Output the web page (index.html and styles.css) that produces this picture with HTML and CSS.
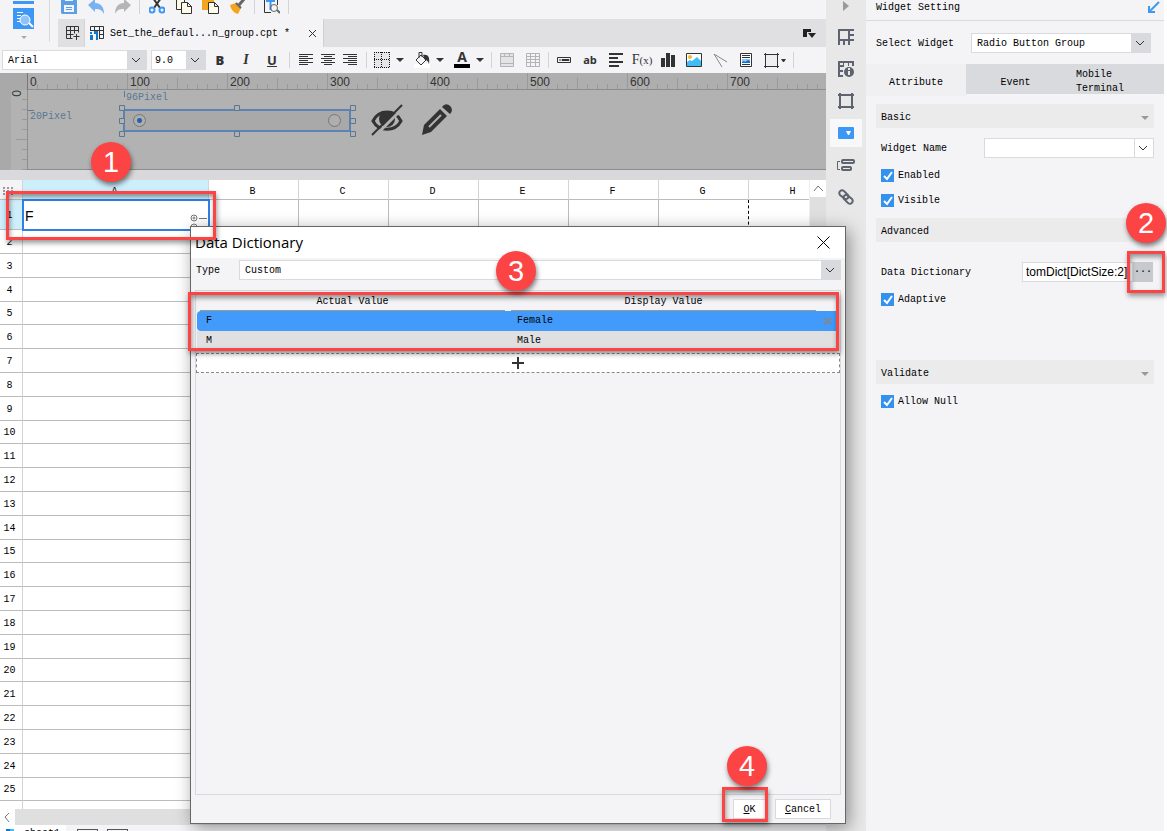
FILE: index.html
```html
<!DOCTYPE html>
<html lang="en">
<head>
    <meta charset="UTF-8">
    <meta name="viewport" content="width=device-width, initial-scale=1.0">
    <title>Report Designer</title>
    <link rel="stylesheet" href="styles.css">
</head>
<body>
    <div class="app">
        <div class="editor">
            <!-- Quick access bar and file tabs -->
            <header class="top">
                <button class="logo" aria-label="Template menu">
                    <svg width="22" height="42" viewBox="0 0 22 42">
                        <path fill="#3d97f5" d="M0 1h21v3H0zM0 8h21v21H0z"/>
                        <path fill="#fff" d="M4 12h6v1H4zM4 15h4v1H4zM4 18h3v1H4zM4 21h4v1H4z"/>
                        <circle cx="12" cy="20" r="5" fill="#8ec2f9" stroke="#fff" stroke-width="1"/>
                        <path d="M16 23l4 4" stroke="#fff" stroke-width="2"/>
                        <path fill="#aaa" d="M8 36h6l-3 3z"/>
                    </svg>
                </button>
                <div class="top-main">
                    <div class="quick">
                        <button aria-label="Save"><svg width="16" height="18" viewBox="0 0 16 18"><path fill="#5b9fe6" d="M0 0h16v18H1l-1-1z"/><path fill="#f4f4f7" d="M3 9h10v7H3zM4 0h8v5H4z"/><path fill="#5b9fe6" d="M5 11h6v1H5zM5 13h6v1H5z"/></svg></button>
                        <button aria-label="Undo"><svg width="16" height="18" viewBox="0 0 16 18"><path fill="#78b2f2" d="M0 9l7-6v4c6 0 9 4 9 11-2-4-4-5-9-5v3z"/></svg></button>
                        <button aria-label="Redo"><svg width="16" height="18" viewBox="0 0 16 18"><path fill="#b5b5b8" d="M16 9L9 3v4C3 7 0 11 0 18c2-4 4-5 9-5v3z"/></svg></button>
                        <span class="sep"></span>
                        <button aria-label="Cut"><svg width="16" height="18" viewBox="0 0 16 18" fill="none"><path d="M4 2l7 10M12 2L5 12" stroke="#333" stroke-width="2"/><circle cx="3" cy="14" r="2.500" stroke="#3d97f5" stroke-width="2"/><circle cx="13" cy="14" r="2.500" stroke="#3d97f5" stroke-width="2"/></svg></button>
                        <button aria-label="Copy"><svg width="17" height="18" viewBox="0 0 17 18"><path fill="#fffbe9" stroke="#333" d="M1.500 1.500h8v12h-8z"/><path fill="#fffbe9" stroke="#333" d="M6.500 6.500h6l4 4v7h-10zM12.500 6.500v4h4"/></svg></button>
                        <button aria-label="Paste"><svg width="17" height="18" viewBox="0 0 17 18"><path fill="#f3a51d" d="M0 0h12v14H0z"/><path fill="#fffbe9" stroke="#333" d="M6.500 6.500h6l4 4v7h-10zM12.500 6.500v4h4"/></svg></button>
                        <button aria-label="Format painter"><svg width="16" height="18" viewBox="0 0 16 18"><path d="M9 9l6-7" stroke="#666" stroke-width="3"/><path fill="#f3a51d" d="M0 9l6-2 5 5-3 6c-4-1-7-4-8-9z"/><path d="M6 7l5 5" stroke="#666" stroke-width="2"/></svg></button>
                        <span class="sep"></span>
                        <button aria-label="Preview"><svg width="17" height="18" viewBox="0 0 17 18" fill="none"><path d="M8 16.500H1.500v-16h13V9" stroke="#333"/><path d="M3 5h9M7.500 5v9" stroke="#3d97f5" stroke-width="2"/><circle cx="11" cy="12" r="3.500" stroke="#666"/><path d="M14 14l3 3" stroke="#666" stroke-width="2"/></svg></button>
                        <span class="sep"></span>
                    </div>
                    <div class="file-tabs">
                        <button class="new-tab" aria-label="New template">
                            <svg width="14" height="14" viewBox="0 0 14 14" fill="none" stroke="#333"><path d="M6.500 12.500h-6v-12h12v6M.5 4.500h12M.5 8.500h7M4.500.5v12M8.500.5v7M10.500 8v6M7.500 10.500h6"/></svg>
                        </button>
                        <div class="file-tab">
                            <svg width="14" height="14" viewBox="0 0 14 14" fill="none"><path stroke="#333" d="M.5 5V.5h13v12H9M.5 4.500h13M9 8.500h4.500M4.500.5v5M9.500.5v12"/><path fill="#1277c9" d="M0 6h2v2H0zM0 9h3v5H0zM4 5h4v9H6V8H4z"/></svg>
                            <span>Set_the_defaul...n_group.cpt *</span>
                            <button aria-label="Close tab"><svg width="9" height="9" viewBox="0 0 9 9"><path d="M1 1l7 7M8 1L1 8" stroke="#333"/></svg></button>
                        </div>
                        <button class="tab-list" aria-label="Tab list"><svg width="13" height="11" viewBox="0 0 13 11"><path fill="#222" d="M0 1h8v3H4v5H0zM5 5h8l-4 5z"/></svg></button>
                    </div>
                </div>
            </header>

            <!-- Format bar -->
            <div class="format">
                <select class="font-name" aria-label="Font"><option>Arial</option></select>
                <select class="font-size" aria-label="Font size"><option>9.0</option></select>
                <div class="group group-style">
                    <button class="glyph" aria-label="Bold"><b>B</b></button>
                    <button class="glyph" aria-label="Italic"><i>I</i></button>
                    <button class="glyph" aria-label="Underline"><u>U</u></button>
                </div>
                <span class="sep"></span>
                <div class="group group-align">
                    <button aria-label="Align left"><svg width="14" height="12" viewBox="0 0 14 12"><path stroke="#333" d="M0 .5h14M0 2.500h9M0 4.500h14M0 6.500h9M0 8.500h14M0 10.500h9"/></svg></button>
                    <button aria-label="Align center"><svg width="14" height="12" viewBox="0 0 14 12"><path stroke="#333" d="M0 .5h14M3 2.500h8M0 4.500h14M3 6.500h8M0 8.500h14M3 10.500h8"/></svg></button>
                    <button aria-label="Align right"><svg width="14" height="12" viewBox="0 0 14 12"><path stroke="#333" d="M0 .5h14M5 2.500h9M0 4.500h14M5 6.500h9M0 8.500h14M5 10.500h9"/></svg></button>
                </div>
                <span class="sep"></span>
                <div class="group group-menu">
                    <button aria-label="Borders"><svg width="16" height="16" viewBox="0 0 16 16"><path fill="#e6e6e8" d="M0 0h16v16H0z"/><path fill="none" stroke="#111" stroke-dasharray="1 1" d="M0 .5h16M0 15.500h16M.5 0v16M15.500 0v16M0 7.500h16M7.500 0v16"/></svg><span class="caret"></span></button>
                    <button aria-label="Fill colour"><svg width="16" height="16" viewBox="0 0 16 16"><path fill="#fff" d="M0 12h16v4H0z"/><path fill="#f4f4f7" stroke="#333" d="M2 8l5-5 5 5-5 5zM5 6V.5h3V5"/><path fill="#333" d="M9 3c5-1 7 2 6 9-1-3-2-4-4-4z"/></svg><span class="caret"></span></button>
                    <button aria-label="Font colour"><span class="font-color">A</span><span class="caret"></span></button>
                </div>
                <span class="sep"></span>
                <div class="group">
                    <button aria-label="Merge cells"><svg width="14" height="14" viewBox="0 0 14 14" fill="none" stroke="#b4b4b6"><path fill="#e4e4e6" d="M.5.5h13v13H.5zM.5 3.500h13M4.500.5v3M9.500.5v3M.5 10.500h13"/></svg></button>
                    <button aria-label="Unmerge cells"><svg width="14" height="14" viewBox="0 0 14 14" fill="none" stroke="#b4b4b6"><path d="M.5.5h13v13H.5zM.5 3.500h13M.5 6.500h13M.5 9.500h13M4.500.5v13M9.500.5v13"/></svg></button>
                </div>
                <span class="sep"></span>
                <div class="group">
                    <button aria-label="Insert widget"><svg width="14" height="6" viewBox="0 0 14 6" fill="none" stroke="#333"><path d="M.5.5h13v5H.5zM5 2.500h7v1H5zM2 3h2"/></svg></button>
                    <button class="glyph-small" aria-label="Text"><b>ab</b></button>
                    <button aria-label="Rich text"><svg width="14" height="14" viewBox="0 0 14 14"><path stroke="#333" stroke-width="2" d="M0 1h14M0 5h9M0 9h14M0 13h10"/></svg></button>
                    <button class="fx" aria-label="Formula">F<small>(x)</small></button>
                    <button aria-label="Chart"><svg width="14" height="14" viewBox="0 0 14 14"><path fill="#333" d="M0 5h4v9H0zM5 0h4v14H5zM10 2h4v12h-4z"/></svg></button>
                    <button aria-label="Image"><svg width="16" height="14" viewBox="0 0 16 14"><path fill="#fff" stroke="#333" d="M.5.5h15v13H.5z"/><path fill="#3fbdf5" d="M1 13V9l3-2 2 1 5-4 4 4v5z"/><circle cx="4" cy="4" r="2" fill="#f7b733"/></svg></button>
                    <button aria-label="Slope line"><svg width="14" height="13" viewBox="0 0 14 13" fill="none" stroke="#888"><path d="M1 0l13 8M1 0l8 13"/></svg></button>
                    <button aria-label="Sub report"><svg width="12" height="14" viewBox="0 0 12 14"><path fill="#fff" stroke="#333" d="M.5.5h11v13H.5z"/><path stroke="#333" d="M2 2.500h8M2 4.500h8M2 11.500h8"/><path fill="#8cc8f8" d="M2 6h8v4H2z"/><path fill="#1273d0" d="M2 10V9l2-1 1 1 3-2 2 1v2z"/></svg></button>
                    <button class="wide" aria-label="Float element"><svg width="22" height="15" viewBox="0 0 22 15"><path fill="#efefef" stroke="#333" d="M1.500 1.500h12v12h-12z"/><path stroke="#333" d="M0 1.500h15M0 13.500h15M1.500 0v15M13.500 0v15"/><path fill="#333" d="M17 6h5l-2 3h-1z"/></svg></button>
                </div>
                <span class="sep"></span>
            </div>

            <!-- Widget designer -->
            <div class="designer">
                <div class="corner"></div>
                <div class="ruler-x" id="ruler-x"></div>
                <div class="ruler-y"><span>0</span></div>
                <div class="canvas">
                    <span class="measure measure-x">96Pixel</span>
                    <span class="measure measure-y">20Pixel</span>
                    <div class="radio-widget">
                        <input type="radio" name="preview" aria-label="First option" checked>
                        <input type="radio" name="preview" aria-label="Second option">
                    </div>
                    <svg class="handles" width="238" height="32" viewBox="0 0 238 32" fill="#b2b2b2" stroke="#5a7894">
                        <path d="M.5.5h5v5h-5zM115.500.5h5v5h-5zM231.500.5h5v5h-5zM.5 13.500h5v5h-5zM231.500 13.500h5v5h-5zM.5 26.500h5v5h-5zM115.500 26.500h5v5h-5zM231.500 26.500h5v5h-5z"/>
                    </svg>
                    <button class="canvas-hide" aria-label="Hide">
                        <svg width="32" height="32" viewBox="0 0 32 32" fill="none" stroke="#333"><path stroke-width="3" d="M2 17C8 5 24 5 30 17 24 28 8 28 2 17z"/><circle cx="16" cy="15" r="8" fill="#333" stroke="none"/><path stroke="#b2b2b2" stroke-width="3" d="M5 31L32 4"/><path stroke-width="2" d="M1 31L31 1"/></svg>
                    </button>
                    <button class="canvas-edit" aria-label="Edit">
                        <svg width="32" height="32" viewBox="0 0 32 32"><path fill="#333" d="M1 31l2-10L19 5l7 7-16 16zM21 3c3-4 6-3 8-1s3 5 0 8z"/><path d="M8 23L20 11" stroke="#b2b2b2" stroke-width="2"/></svg>
                    </button>
                </div>
            </div>

            <!-- Spreadsheet -->
            <div class="sheet">
                <div class="sheet-view">
                    <table>
                        <colgroup>
                            <col class="col-num"><col class="col-a"><col><col><col><col><col><col><col>
                        </colgroup>
                        <thead>
                            <tr>
                                <th class="all"><svg width="11" height="8" viewBox="0 0 11 8"><path stroke="#999" stroke-width="2" stroke-dasharray="2 2" d="M0 1h11M0 4h11M0 7h11"/></svg></th>
                                <th class="on">A</th><th>B</th><th>C</th><th>D</th><th>E</th><th>F</th><th>G</th><th>H</th>
                            </tr>
                        </thead>
                        <tbody id="rows"></tbody>
                    </table>
                </div>
                <div class="scroll-y">
                    <button aria-label="Scroll up"><svg width="11" height="7" viewBox="0 0 11 7" fill="none"><path d="M1 6l4-5 5 5" stroke="#777"/></svg></button>
                    <div class="thumb"></div>
                </div>
            </div>
            <div class="scroll-x">
                <button aria-label="Scroll left"><svg width="6" height="11" viewBox="0 0 6 11" fill="none"><path d="M5 1L1 5l4 5" stroke="#777"/></svg></button>
                <div class="thumb"></div>
            </div>
            <footer class="sheet-tabs">
                <div class="sheet-tab"><svg width="8" height="8" viewBox="0 0 8 8"><path fill="#1277c9" d="M0 0h4v8H0z"/><path fill="#3fbdf5" d="M4 0h4v8H4z"/></svg><span>sheet1</span></div>
                <button aria-label="Add sheet"></button>
                <button aria-label="Add form sheet"></button>
            </footer>
        </div>

        <!-- Panel switcher -->
        <nav class="rail">
            <button class="rail-fold" aria-label="Collapse"><svg width="6" height="10" viewBox="0 0 6 10"><path fill="#999" d="M0 0l6 5-6 5z"/></svg></button>
            <button aria-label="Cell element"><svg width="16" height="16" viewBox="0 0 16 16" fill="none" stroke="#5d6470" stroke-width="2"><path d="M1 16V1h15M0 11h16M11 1v15M11 6h5M6 11v5"/></svg></button>
            <button aria-label="Cell attributes"><svg width="16" height="16" viewBox="0 0 16 16"><path fill="none" stroke="#5d6470" stroke-width="2" d="M5 15H1V1h14v4M0 5h6M0 10h5"/><path stroke="#5d6470" d="M5.500 1v5M10.500 1v4"/><circle cx="11" cy="11" r="5" fill="#5d6470"/><path fill="#e8e8e8" d="M10 7h2v2h-2zM10 10h2v4h-2z"/></svg></button>
            <button aria-label="Float element"><svg width="16" height="16" viewBox="0 0 16 16" fill="none" stroke="#5d6470" stroke-width="2"><path d="M0 2h16M0 14h16M2 0v16M14 0v16"/></svg></button>
            <button class="active" aria-label="Widget setting"><svg width="16" height="12" viewBox="0 0 16 12"><rect width="16" height="12" rx="1" fill="#3d97f5"/><path fill="#fff" d="M8 4h5l-2 4h-1z"/></svg></button>
            <button aria-label="Condition attributes"><svg width="18" height="13" viewBox="0 0 18 13" fill="none" stroke="#5d6470"><path d="M3 2.500H.5v8H3"/><rect x="5" y="1" width="12" height="3" rx="1" stroke-width="2"/><rect x="5" y="8" width="9" height="3" rx="1" stroke-width="2"/></svg></button>
            <button aria-label="Hyperlink"><svg width="16" height="16" viewBox="0 0 16 16" fill="none" stroke="#5d6470" stroke-width="2" stroke-linecap="round"><path d="M7 10L2 6C0 3 3 0 6 2l4 4c1 2 0 4-2 4"/><path d="M9 6l5 4c2 3-1 6-4 4l-4-4c-1-2 0-4 2-4"/></svg></button>
        </nav>

        <!-- Widget setting panel -->
        <aside class="settings">
            <div class="settings-head">
                <span>Widget Setting</span>
                <button aria-label="Detach panel"><svg width="12" height="12" viewBox="0 0 12 12"><path d="M11 1L3 9" stroke="#3d97f5" stroke-width="2"/><path fill="#3d97f5" d="M0 12V5h2v3l2 2h3v2z"/></svg></button>
            </div>
            <div class="field field-select">
                <label for="widget-type">Select Widget</label>
                <select id="widget-type"><option>Radio Button Group</option></select>
            </div>
            <div class="tabs">
                <button class="active">Attribute</button>
                <button>Event</button>
                <button class="two-line">Mobile<br>Terminal</button>
            </div>
            <div class="settings-body">
                <button class="section">Basic<span class="caret"></span></button>
                <div class="field field-name">
                    <label for="widget-name">Widget Name</label>
                    <select id="widget-name" class="plain"><option></option></select>
                </div>
                <label class="check"><input type="checkbox" checked>Enabled</label>
                <label class="check"><input type="checkbox" checked>Visible</label>
                <button class="section">Advanced<span class="caret"></span></button>
                <div class="field field-dict">
                    <label for="dict">Data Dictionary</label>
                    <input type="text" id="dict" value="tomDict[DictSize:2]">
                    <button aria-label="Edit dictionary">&middot;&middot;&middot;</button>
                </div>
                <label class="check"><input type="checkbox" checked>Adaptive</label>
                <button class="section section-last">Validate<span class="caret"></span></button>
                <label class="check"><input type="checkbox" checked>Allow Null</label>
            </div>
        </aside>
    </div>

    <!-- Data dictionary dialog -->
    <div class="dialog" role="dialog" aria-labelledby="dialog-title">
        <div class="dialog-title">
            <h2 id="dialog-title">Data Dictionary</h2>
            <button aria-label="Close"><svg width="13" height="13" viewBox="0 0 13 13"><path d="M.5.5l12 12M12.500.5l-12 12" stroke="#000"/></svg></button>
        </div>
        <div class="dialog-type">
            <label for="dict-type">Type</label>
            <select id="dict-type"><option>Custom</option></select>
        </div>
        <div class="dialog-body">
            <table class="dict-table">
                <thead>
                    <tr><th><span>Actual Value</span></th><th><span>Display Value</span></th><th class="del"></th></tr>
                </thead>
                <tbody>
                    <tr class="selected"><td>F</td><td>Female</td><td class="del"><button aria-label="Delete"><svg width="9" height="8" viewBox="0 0 9 8"><path d="M1 1l7 6M8 1L1 7" stroke="#808890" stroke-width="2"/></svg></button></td></tr>
                    <tr><td>M</td><td>Male</td><td></td></tr>
                </tbody>
            </table>
            <button class="add" aria-label="Add row"><svg width="12" height="12" viewBox="0 0 12 12"><path d="M6 0v12M0 6h12" stroke="#333" stroke-width="2"/></svg></button>
        </div>
        <div class="dialog-foot">
            <button class="ok"><u>O</u>K</button>
            <button class="cancel"><u>C</u>ancel</button>
        </div>
    </div>

    <!-- Step marks -->
    <div class="frame frame-1"></div><div class="step step-1">1</div>
    <div class="frame frame-2"></div><div class="step step-2">2</div>
    <div class="frame frame-3"></div><div class="step step-3">3</div>
    <div class="frame frame-4"></div><div class="step step-4">4</div>

    <script>
        // Ruler segments
        const ruler = document.getElementById('ruler-x');
        for (let i = 0; i < 8; i++) {
            const mark = document.createElement('span');
            mark.textContent = i * 100;
            ruler.appendChild(mark);
        }

        // Sheet rows
        const rows = document.getElementById('rows');
        const radios = `<svg width="18" height="16" viewBox="0 0 18 16" fill="none" stroke="#777"><circle cx="5" cy="5" r="3"/><circle cx="5" cy="5" r="1"/><path d="M10 5.500h8M10 13.500h8"/><circle cx="5" cy="14" r="3"/><circle cx="5" cy="14" r="1"/></svg>`;
        for (let r = 1; r <= 26; r++) {
            const tr = document.createElement('tr');
            const first = r === 1 ? `<td class="cell-on"><div>F${radios}</div></td>` : '<td></td>';
            tr.innerHTML = `<th class="${r === 1 ? 'on' : ''}">${r}</th>${first}${'<td></td>'.repeat(7)}`;
            rows.appendChild(tr);
        }
    </script>
</body>
</html>
```

FILE: styles.css
```css
* {
    box-sizing: border-box;
}
body {
    margin: 0;
    height: 100vh;
    overflow: hidden;
    background-color: #fff;
    color: #000;
    font-family: "Liberation Mono", monospace;
    font-size: 10px;
    line-height: 14px;
}
button,
select,
input {
    font: inherit;
    color: inherit;
    margin: 0;
}
button {
    display: flex;
    align-items: center;
    justify-content: center;
    padding: 0;
    border: 0;
    background: none;
}
svg {
    display: block;
    flex: none;
}
select {
    appearance: none;
    height: 20px;
    padding: 2px 22px 0 5px;
    border: 1px solid #d9dadd;
    border-radius: 0;
    background: #fff url("data:image/svg+xml,%3Csvg xmlns='http://www.w3.org/2000/svg' width='19' height='18'%3E%3Cpath fill='%23d9dadd' d='M0 0h19v18H0z'/%3E%3Cpath fill='none' stroke='%23333' d='M5 7l4 4 4-4'/%3E%3C/svg%3E") no-repeat right center;
}
select.plain {
    background-image: url("data:image/svg+xml,%3Csvg xmlns='http://www.w3.org/2000/svg' width='19' height='18'%3E%3Cpath fill='%23d9dadd' d='M0 0h1v18H0z'/%3E%3Cpath fill='none' stroke='%23333' d='M5 7l4 4 4-4'/%3E%3C/svg%3E");
}
.app {
    display: flex;
    height: 100%;
    padding-right: 3px;
}
.editor {
    flex: 1;
    min-width: 0;
    display: flex;
    flex-direction: column;
    background-color: #f4f4f7;
}
.sep {
    flex: none;
    width: 1px;
    height: 16px;
    margin: 0 2px;
    background-color: #d4d4d6;
}
.caret {
    border: 4px solid transparent;
    border-top-color: #333;
    border-bottom: 0;
}

/* Top */
.top {
    display: flex;
    height: 47px;
}
.logo {
    align-items: flex-start;
    width: 50px;
    height: 42px;
    padding-right: 2px;
    border-right: 1px solid #d9dadd;
}
.top-main {
    flex: 1;
    padding-left: 5px;
}
.quick {
    display: flex;
    align-items: flex-end;
    height: 19px;
    padding-bottom: 5px;
}
.quick button {
    width: 27px;
}
.quick .sep {
    margin: 0 3px;
}
.file-tabs {
    display: flex;
    height: 28px;
    margin-left: 3px;
    background-color: #e0e0e2;
}
.new-tab {
    width: 27px;
    border-right: 1px solid #d4d4d6;
    padding-left: 4px;
}
.file-tab {
    display: flex;
    align-items: center;
    gap: 6px;
    width: 239px;
    padding: 0 6px 0 5px;
    background-color: #f4f4f7;
    border-right: 1px solid #d0d0d2;
}
.file-tab span {
    padding-top: 2px;
}
.file-tab button {
    margin-left: auto;
}
.tab-list {
    margin-left: auto;
    padding-right: 10px;
}

/* Format bar */
.format {
    display: flex;
    align-items: center;
    height: 26px;
    padding-left: 2px;
}
.font-name {
    width: 145px;
    margin-right: 4px;
}
.font-size {
    width: 55px;
    padding-left: 3px;
}
.group {
    display: flex;
}
.group button {
    width: 26px;
    height: 20px;
}
.group-style {
    padding: 0 2px 0 1px;
}
.group-align {
    padding: 0 3px;
}
.group-align button {
    width: 22px;
}
.group-menu button {
    width: 40px;
    gap: 6px;
}
.group .wide {
    width: 32px;
}
.glyph {
    color: #333;
    font-family: "Open Sans", sans-serif;
    font-size: 13px;
    font-weight: bold;
}
.glyph i {
    font-family: "Liberation Serif", serif;
    font-size: 14px;
}
.glyph-small {
    color: #333;
    font-family: "Open Sans", sans-serif;
    font-size: 11px;
}
.font-color {
    width: 16px;
    height: 16px;
    border-bottom: 4px solid #000;
    color: #333;
    font-family: "Open Sans", sans-serif;
    font-size: 14px;
    font-weight: bold;
    line-height: 10px;
}
.fx {
    color: #333;
    font-family: "Liberation Serif", serif;
    font-size: 14px;
}
.fx small {
    font-size: 11px;
}

/* Designer */
.designer {
    display: grid;
    grid-template-columns: 28px 1fr;
    grid-template-rows: 17px 80px;
    background-color: #b2b2b2;
    overflow: hidden;
}
.corner {
    background-color: #a9a9a9;
    border-right: 1px solid #777;
}
.ruler-x {
    display: flex;
    min-width: 0;
    overflow: hidden;
    border-bottom: 1px solid #8c8c8c;
    background-color: #aeaeae;
}
.ruler-x span {
    flex: none;
    width: 100px;
    padding: 1px 0 0 2px;
    color: #333;
    font-family: "Liberation Sans", sans-serif;
    font-size: 12px;
    line-height: 16px;
    background:
        linear-gradient(#999, #999) 99px 0 / 1px 16px no-repeat,
        linear-gradient(#999, #999) 49px 5px / 1px 11px no-repeat,
        repeating-linear-gradient(90deg, transparent 0 9px, #999 9px 10px) 0 11px / 100px 5px no-repeat;
}
.ruler-y {
    margin-left: 11px;
    border-right: 1px solid #8c8c8c;
    color: #333;
    font-family: "Liberation Sans", sans-serif;
    font-size: 12px;
    background:
        linear-gradient(#999, #999) 5px 49px / 11px 1px no-repeat,
        repeating-linear-gradient(transparent 0 9px, #999 9px 10px) 11px 0 / 5px 80px no-repeat;
    box-shadow: -11px 0 #a9a9a9;
}
.ruler-y span {
    display: block;
    width: 10px;
    height: 7px;
    line-height: 10px;
    writing-mode: vertical-rl;
}
.canvas {
    position: relative;
    border-bottom: 1px solid #8c8c8c;
}
.measure {
    position: absolute;
    color: #5a7894;
    line-height: 13px;
}
.measure-x {
    left: 96px;
    top: 1px;
    padding-left: 2px;
    background: linear-gradient(#5a7894, #5a7894) 0 0 / 1px 6px no-repeat;
}
.measure-y {
    left: 0;
    top: 20px;
    padding-left: 2px;
    background: linear-gradient(#5a7894, #5a7894) 0 0 / 6px 1px no-repeat;
}
.radio-widget {
    position: absolute;
    left: 95px;
    top: 19px;
    width: 228px;
    height: 23px;
    display: flex;
    align-items: center;
    justify-content: space-between;
    padding: 0 8px;
    border: 2px solid #5b84b4;
    background-color: #a9a9a9;
}
.radio-widget input {
    appearance: none;
    width: 13px;
    height: 13px;
    border: 1px solid #777;
    border-radius: 50%;
    background-color: #aeaeae;
}
.radio-widget input:checked {
    background: radial-gradient(#2862ac 0 2px, #aeaeae 3px);
}
.handles {
    position: absolute;
    left: 91px;
    top: 15px;
}
.canvas-hide,
.canvas-edit {
    position: absolute;
    top: 14px;
}
.canvas-hide {
    left: 343px;
}
.canvas-edit {
    left: 393px;
}

/* Spreadsheet */
.sheet {
    flex: 1;
    min-height: 0;
    display: flex;
    margin-top: 10px;
    background-color: #fff;
    box-shadow: 0 -10px #d9d9dc;
}
.sheet-view {
    flex: 1;
    min-width: 0;
    overflow: hidden;
}
.sheet table {
    table-layout: fixed;
    width: 839px;
    border-spacing: 0;
}
.sheet col {
    width: 90px;
}
.sheet .col-num {
    width: 23px;
}
.sheet .col-a {
    width: 186px;
}
.sheet th,
.sheet td {
    height: 24px;
    padding: 0;
    border-right: 1px solid #bcbcbe;
    border-bottom: 1px solid #bcbcbe;
}
.sheet th {
    padding: 2px 2px 0 0;
    font-weight: normal;
    border-right-color: #d4d4d6;
}
.sheet tbody th {
    padding-right: 3px;
}
.sheet tbody tr:nth-child(5n) > * {
    height: 23px;
}
.sheet tbody tr:first-child > * {
    height: 30px;
}
.sheet tbody tr:first-child td:nth-child(8) {
    border-right: 1px dashed #000;
}
.sheet thead th {
    height: 20px;
    padding-top: 4px;
}
.sheet thead .all {
    padding: 2px 0 0 3px;
    background-color: #f4f4f7;
}
.sheet .on {
    background-color: #cdeefb;
}
.cell-on {
    outline: 2px solid #2f7fe6;
    outline-offset: -1px;
}
.cell-on div {
    display: flex;
    align-items: center;
    justify-content: space-between;
    height: 29px;
    padding: 2px 1px 0 2px;
    font-family: "Liberation Sans", sans-serif;
    font-size: 14px;
}
.cell-on svg {
    align-self: flex-end;
}
.scroll-y {
    display: flex;
    flex-direction: column;
    width: 17px;
    border-left: 1px solid #eee;
    background-color: #fff;
}
.scroll-y button {
    height: 17px;
}
.thumb {
    flex: 1;
    background-color: #dfdfdf;
}
.scroll-x {
    display: flex;
    height: 16px;
    background-color: #fff;
}
.scroll-x button {
    width: 15px;
    padding-right: 2px;
}
.sheet-tabs {
    display: flex;
    align-items: flex-start;
    gap: 9px;
    height: 6px;
    overflow: hidden;
}
.sheet-tab {
    display: flex;
    gap: 10px;
    width: 66px;
    margin-right: 2px;
    padding: 4px 0 0 6px;
    background-color: #fff;
}
.sheet-tab span {
    line-height: 10px;
}
.sheet-tabs button {
    width: 21px;
    height: 14px;
    margin-top: 4px;
    border: 1px solid #555;
}

/* Rail */
.rail {
    display: flex;
    flex-direction: column;
    align-items: center;
    gap: 4px;
    width: 40px;
    background-color: #e8e8e8;
}
.rail button {
    width: 32px;
    height: 28px;
}
.rail .rail-fold {
    height: 19px;
    padding-bottom: 7px;
}
.rail .active {
    background-color: #f8f8fa;
}

/* Settings */
.settings {
    width: 298px;
    background-color: #f4f4f7;
}
.settings-head {
    display: flex;
    justify-content: space-between;
    height: 21px;
    padding: 1px 4px 0 10px;
    border-bottom: 1px solid #d9dadd;
}
.settings-head button {
    align-items: flex-start;
}
.field {
    display: flex;
    align-items: center;
    height: 20px;
}
.field label {
    padding-top: 2px;
}
.field-select {
    margin: 12px 13px 11px 10px;
}
.field-select select {
    flex: 1;
}
.field-select label {
    width: 95px;
}
.tabs {
    display: grid;
    grid-template-columns: 100px 99px 1fr;
    height: 30px;
    background-color: #d9dadd;
}
.tabs button {
    padding-top: 6px;
}
.tabs .active {
    background-color: #f0f0f2;
}
.tabs .two-line {
    justify-content: flex-start;
    padding: 4px 0 0 11px;
    text-align: left;
}
.settings-body {
    padding: 10px 10px 0 10px;
}
.section {
    justify-content: space-between;
    width: 100%;
    height: 24px;
    padding: 3px 5px 0 5px;
    background-color: #ebebec;
}
.section .caret {
    border-top-color: #999;
}
.field-name {
    margin: 10px 0 5px 5px;
}
.field-name label {
    width: 103px;
}
.field-name select {
    flex: 1;
}
.check {
    display: flex;
    align-items: center;
    gap: 4px;
    height: 25px;
    padding-left: 5px;
}
.check input {
    appearance: none;
    width: 13px;
    height: 13px;
    background: #3492ef url("data:image/svg+xml,%3Csvg xmlns='http://www.w3.org/2000/svg' width='13' height='13'%3E%3Cpath fill='none' stroke='%23fff' stroke-width='2' d='M3 7l3 3 5-7'/%3E%3C/svg%3E");
}
.check + .section {
    margin-top: 5px;
}
.field-dict {
    margin: 20px 1px 5px 5px;
}
.field-dict label {
    width: 141px;
}
.field-dict input {
    flex: 1;
    min-width: 0;
    height: 20px;
    padding: 0 3px;
    border: 1px solid #d9dadd;
    font-family: "Liberation Sans", sans-serif;
    font-size: 12px;
}
.field-dict button {
    width: 20px;
    height: 20px;
    background-color: #c8c9cf;
}
.check + .section-last {
    margin: 48px 0 5px 0;
}

/* Dialog */
.dialog {
    position: absolute;
    left: 190px;
    top: 226px;
    width: 656px;
    height: 598px;
    display: flex;
    flex-direction: column;
    border: 1px solid #666;
    background-color: #f4f4f7;
    box-shadow: 3px 4px 16px rgba(0, 0, 0, 0.4);
}
.dialog-title {
    display: flex;
    align-items: center;
    justify-content: space-between;
    height: 31px;
    padding: 0 15px 0 4px;
    background-color: #fff;
}
.dialog-title h2 {
    margin: 0;
    padding-bottom: 2px;
    font-family: "Open Sans", sans-serif;
    font-size: 15px;
    font-weight: normal;
    line-height: 20px;
}
.dialog-type {
    display: flex;
    align-items: center;
    height: 24px;
    padding: 0 4px 0 5px;
}
.dialog-type label {
    width: 43px;
    padding-top: 2px;
}
.dialog-type select {
    flex: 1;
}
.dialog-body {
    flex: 1;
    margin: 8px 4px 0 4px;
    border: 1px solid #d9dadd;
}
.dict-table {
    table-layout: fixed;
    width: 639px;
    margin-left: 1px;
    border-spacing: 0;
}
.dict-table th,
.dict-table td {
    height: 20px;
    padding: 0 0 0 9px;
}
.dict-table th {
    padding: 0 3px;
    font-weight: normal;
}
.dict-table th span {
    display: block;
    height: 20px;
    padding-top: 1px;
    line-height: 20px;
    border-bottom: 1px solid #999;
}
.dict-table .del {
    width: 17px;
    padding: 0 0 0 4px;
}
.dict-table tbody tr {
    background-color: #e0e0e2;
}
.dict-table tbody .selected {
    background-color: #429bfa;
}
.dict-table .selected td:first-child {
    border-radius: 4px 0 0 4px;
}
.add {
    width: 100%;
    height: 20px;
    margin-top: 2px;
    border: 1px dashed #888;
    background-color: #fff;
}
.dialog-foot {
    display: flex;
    justify-content: flex-end;
    gap: 9px;
    padding: 4px 14px 4px 0;
}
.dialog-foot button {
    display: block;
    height: 20px;
    padding-top: 2px;
    border: 1px solid #d9dadd;
    background-color: #fff;
}
.dialog-foot .ok {
    width: 33px;
}
.dialog-foot .cancel {
    width: 56px;
}

/* Step marks */
.frame {
    position: absolute;
    border: 3px solid #fc4444;
    box-shadow: 1px 3px 5px rgba(0, 0, 0, 0.4), inset 1px 3px 5px rgba(0, 0, 0, 0.4);
    pointer-events: none;
}
.frame-1 {
    left: 6px;
    top: 191px;
    width: 210px;
    height: 49px;
}
.frame-2 {
    left: 1127px;
    top: 251px;
    width: 38px;
    height: 42px;
}
.frame-3 {
    left: 188px;
    top: 292px;
    width: 651px;
    height: 59px;
}
.frame-4 {
    left: 722px;
    top: 787px;
    width: 46px;
    height: 35px;
}
.step {
    position: absolute;
    width: 40px;
    height: 40px;
    border-radius: 50%;
    background-color: #fc4444;
    box-shadow: 1px 3px 5px rgba(0, 0, 0, 0.5);
    color: #fff;
    font-family: "Liberation Sans", sans-serif;
    font-size: 29px;
    line-height: 41px;
    text-align: center;
}
.step-1 {
    left: 91px;
    top: 142px;
}
.step-2 {
    left: 1126px;
    top: 203px;
}
.step-3 {
    left: 496px;
    top: 251px;
}
.step-4 {
    left: 727px;
    top: 746px;
}
```
